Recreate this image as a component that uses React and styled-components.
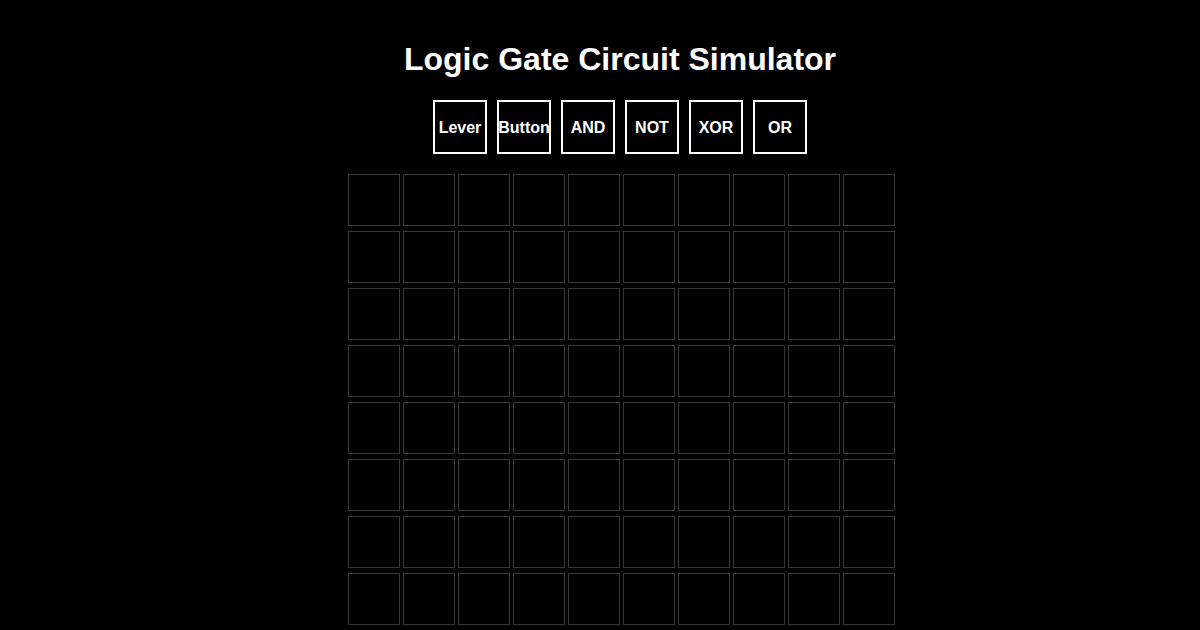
import React from "react";
import styled, { createGlobalStyle } from "styled-components";

const Global = createGlobalStyle`
  html, body { margin: 0; padding: 0; background: #000; }
  body { font-family: "Liberation Sans", Arial, sans-serif; color: #fff; }
`;

const Page = styled.div`
  display: flex;
  flex-direction: column;
  align-items: center;
  padding: 41px 0 0 40px;
`;

const Title = styled.h1`
  margin: 0;
  font-size: 32px;
  font-weight: bold;
  line-height: 37px;
  color: #fff;
`;

const Toolbar = styled.div`
  display: flex;
  gap: 10px;
  margin-top: 22px;
`;

const Tool = styled.button`
  width: 54px;
  height: 54px;
  padding: 1px 0 0;
  box-sizing: border-box;
  background: #000;
  color: #fff;
  border: 2px solid #fff;
  font-family: "Liberation Sans", Arial, sans-serif;
  font-weight: bold;
  font-size: 16px;
  display: flex;
  align-items: center;
  justify-content: center;
  white-space: nowrap;
  overflow: visible;
  cursor: pointer;
`;

const Board = styled.div`
  display: grid;
  grid-template-columns: repeat(10, 52px);
  grid-auto-rows: 52px;
  column-gap: 3px;
  row-gap: 5px;
  margin-top: 20px;
  margin-left: 3px;
`;

const Cell = styled.div`
  box-sizing: border-box;
  border: 1px solid #383838;
  background: #000;
`;

const tools = ["Lever", "Button", "AND", "NOT", "XOR", "OR"];

export default function App() {
  return (
    <>
      <Global />
      <Page>
        <Title>Logic Gate Circuit Simulator</Title>
        <Toolbar>
          {tools.map((t) => (
            <Tool key={t}>{t}</Tool>
          ))}
        </Toolbar>
        <Board>
          {Array.from({ length: 100 }).map((_, i) => (
            <Cell key={i} />
          ))}
        </Board>
      </Page>
    </>
  );
}
